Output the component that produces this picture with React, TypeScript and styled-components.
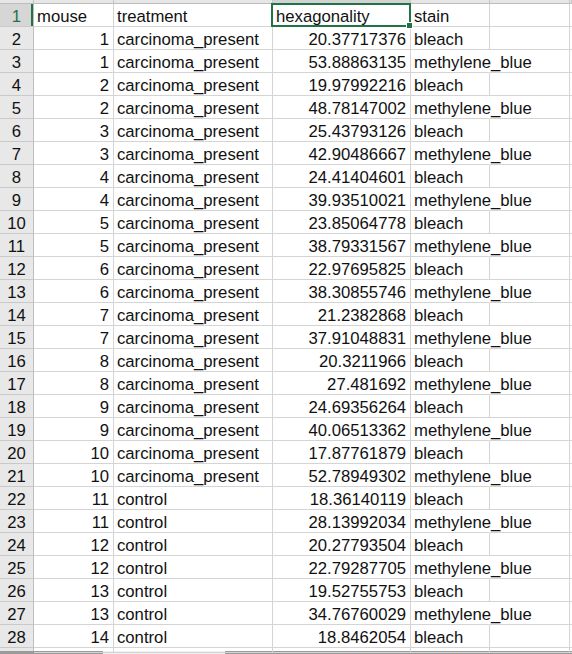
import styled, { createGlobalStyle, css } from "styled-components";

const GlobalStyle = createGlobalStyle`
  html, body {
    margin: 0;
    padding: 0;
    background: #ffffff;
    overflow: hidden;
  }
`;

const cols = "34px 80px 159px 138px 79px 80px 1fr";

const Sheet = styled.div`
  width: 572px;
  height: 654px;
  display: flex;
  flex-direction: column;
  overflow: hidden;
  font-family: "Liberation Sans", Arial, "Noto Sans CJK SC", sans-serif;
  font-size: 16.7px;
  color: #111;
`;

const HeadStrip = styled.div`
  display: grid;
  grid-template-columns: ${cols};
  height: 4px;
  flex: none;
`;

const ColHead = styled.div<{ $sel?: boolean }>`
  box-sizing: border-box;
  background: ${(p) => (p.$sel ? "#d2d2d2" : "#e6e6e6")};
  border-right: 1px solid #c6c6c6;
  border-bottom: 1px solid #bdbdbd;
`;

const Row = styled.div<{ $h?: number }>`
  display: grid;
  grid-template-columns: ${cols};
  height: ${(p) => p.$h ?? 23}px;
  flex: none;
`;

const RowHead = styled.div<{ $sel?: boolean }>`
  box-sizing: border-box;
  background: ${(p) => (p.$sel ? "#d6d6d6" : "#e8e8e8")};
  color: ${(p) => (p.$sel ? "#217346" : "#111")};
  border-right: 1px solid #bdbdbd;
  border-bottom: 1px solid #c9c9c9;
  text-align: center;
  line-height: 18px;
  padding-top: 4px;
  overflow: hidden;
  ${(p) =>
    p.$sel &&
    css`
      box-shadow: inset -2px 0 0 #217346;
    `}
`;

const Cell = styled.div<{ $right?: boolean; $open?: boolean; $sel?: boolean }>`
  box-sizing: border-box;
  position: relative;
  border-right: 1px solid ${(p) => (p.$open ? "transparent" : "#d4d4d4")};
  border-bottom: 1px solid #d4d4d4;
  padding: 4px 4px 0 3px;
  line-height: 18px;
  white-space: nowrap;
  text-align: ${(p) => (p.$right ? "right" : "left")};
  overflow: visible;
  z-index: ${(p) => (p.$open ? 1 : 0)};
  ${(p) =>
    p.$sel &&
    css`
      z-index: 2;
      &::after {
        content: "";
        position: absolute;
        left: -2px;
        top: -1px;
        right: -1px;
        bottom: -1px;
        border: 2px solid #217346;
        box-sizing: border-box;
      }
      &::before {
        content: "";
        position: absolute;
        right: -3px;
        bottom: -3px;
        width: 5px;
        height: 5px;
        background: #217346;
        border: 1px solid #fff;
        z-index: 3;
      }
    `}
`;

const BottomBar = styled.div`
  display: flex;
  height: 3px;
  flex: none;
`;

const BarPart = styled.div<{ $w?: number; $gap?: boolean }>`
  width: ${(p) => (p.$w ? `${p.$w}px` : "auto")};
  flex: ${(p) => (p.$w ? "none" : "1")};
  background: ${(p) => (p.$gap ? "#f0f0f0" : "#9a9a9a")};
`;

type Rec = [number, string, string, string];

const data: Rec[] = [
  [1, "carcinoma_present", "20.37717376", "bleach"],
  [1, "carcinoma_present", "53.88863135", "methylene_blue"],
  [2, "carcinoma_present", "19.97992216", "bleach"],
  [2, "carcinoma_present", "48.78147002", "methylene_blue"],
  [3, "carcinoma_present", "25.43793126", "bleach"],
  [3, "carcinoma_present", "42.90486667", "methylene_blue"],
  [4, "carcinoma_present", "24.41404601", "bleach"],
  [4, "carcinoma_present", "39.93510021", "methylene_blue"],
  [5, "carcinoma_present", "23.85064778", "bleach"],
  [5, "carcinoma_present", "38.79331567", "methylene_blue"],
  [6, "carcinoma_present", "22.97695825", "bleach"],
  [6, "carcinoma_present", "38.30855746", "methylene_blue"],
  [7, "carcinoma_present", "21.2382868", "bleach"],
  [7, "carcinoma_present", "37.91048831", "methylene_blue"],
  [8, "carcinoma_present", "20.3211966", "bleach"],
  [8, "carcinoma_present", "27.481692", "methylene_blue"],
  [9, "carcinoma_present", "24.69356264", "bleach"],
  [9, "carcinoma_present", "40.06513362", "methylene_blue"],
  [10, "carcinoma_present", "17.87761879", "bleach"],
  [10, "carcinoma_present", "52.78949302", "methylene_blue"],
  [11, "control", "18.36140119", "bleach"],
  [11, "control", "28.13992034", "methylene_blue"],
  [12, "control", "20.27793504", "bleach"],
  [12, "control", "22.79287705", "methylene_blue"],
  [13, "control", "19.52755753", "bleach"],
  [13, "control", "34.76760029", "methylene_blue"],
  [14, "control", "18.8462054", "bleach"],
];

function App() {
  return (
    <>
      <GlobalStyle />
      <Sheet>
        <HeadStrip>
          <ColHead />
          <ColHead />
          <ColHead />
          <ColHead $sel />
          <ColHead />
          <ColHead />
          <ColHead />
        </HeadStrip>

        <Row>
          <RowHead $sel>1</RowHead>
          <Cell>mouse</Cell>
          <Cell>treatment</Cell>
          <Cell $sel>hexagonality</Cell>
          <Cell>stain</Cell>
          <Cell />
          <Cell />
        </Row>

        {data.map((r, i) => {
          const long = r[3].length > 8;
          return (
            <Row key={i}>
              <RowHead>{i + 2}</RowHead>
              <Cell $right>{r[0]}</Cell>
              <Cell>{r[1]}</Cell>
              <Cell $right>{r[2]}</Cell>
              <Cell $open={long}>{r[3]}</Cell>
              <Cell />
              <Cell />
            </Row>
          );
        })}

        {/* the next row is cut off by the window edge */}
        <Row $h={3}>
          <RowHead />
          <Cell />
          <Cell />
          <Cell />
          <Cell />
          <Cell />
          <Cell />
        </Row>

        <BottomBar>
          <BarPart $w={103} />
          <BarPart $w={122} $gap />
          <BarPart />
        </BottomBar>
      </Sheet>
    </>
  );
}

export default App;
